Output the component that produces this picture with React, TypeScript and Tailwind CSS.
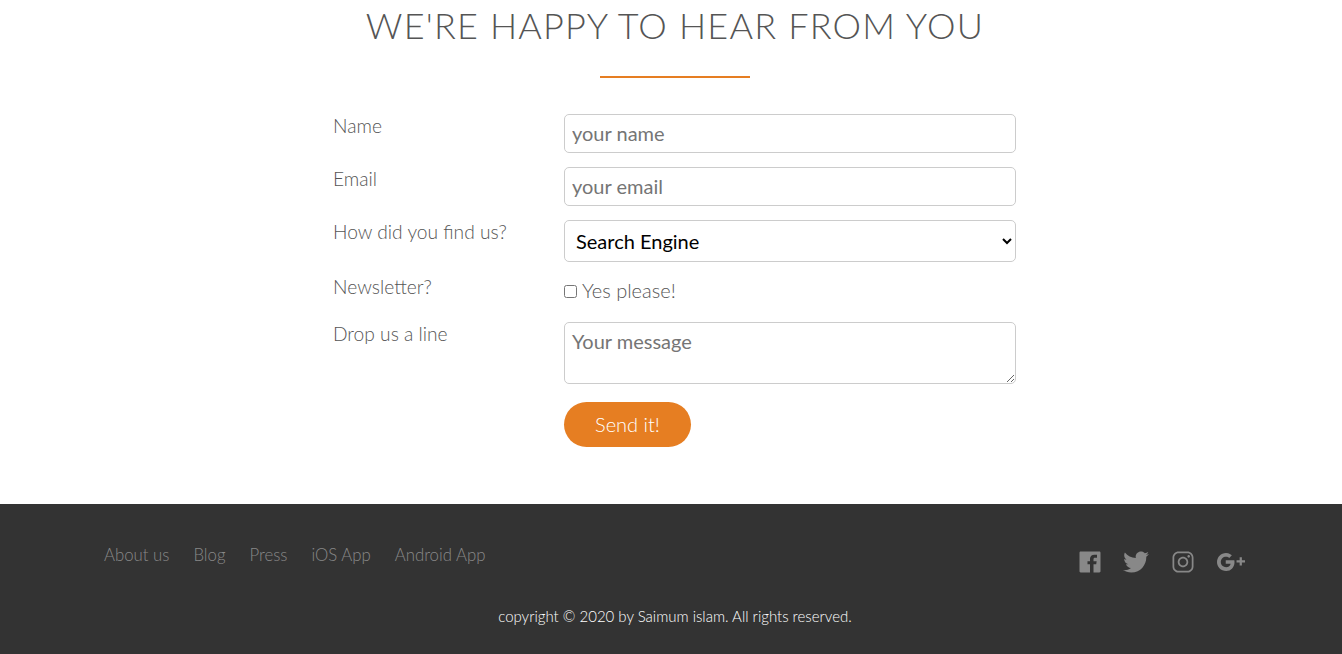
import React from "react";
import { IoLogoFacebook, IoLogoTwitter, IoLogoInstagram, IoLogoGoogleplus } from "react-icons/io";

const labelClass = "w-[231px] shrink-0 text-[19.2px] leading-[24px] font-light text-[#555555]";
const fieldClass =
  "w-[452px] border border-[#cccccc] rounded-[5px] px-[7px] text-[20px] font-normal bg-white outline-none placeholder:text-[#757575]";

export default function App() {
  return (
    <div className="h-[654px] w-[1342px] overflow-hidden bg-white font-['Lato',sans-serif]">
      <div className="w-[1350px]">
        <section className="h-[504px] flex flex-col items-center">
          <h2 className="mt-[4px] text-[36px] leading-[43px] font-light uppercase tracking-[1.18px] text-[#555555] whitespace-nowrap">
            We're happy to hear from you
          </h2>
          <div className="mt-[29px] w-[150px] h-[2px] bg-[#e67e22]" />
          <form className="mt-[36px] w-[684px] flex flex-col">
            <div className="flex items-start">
              <label className={labelClass}>Name</label>
              <input className={`${fieldClass} h-[39px] pb-[2px]`} placeholder="your name" />
            </div>
            <div className="flex mt-[14px] items-start">
              <label className={labelClass}>Email</label>
              <input className={`${fieldClass} h-[39px] pb-[2px]`} placeholder="your email" />
            </div>
            <div className="flex mt-[14px] items-start">
              <label className={labelClass}>How did you find us?</label>
              <select defaultValue="search" className={`${fieldClass} h-[42px] text-black appearance-auto`}>
                <option value="search">Search Engine</option>
                <option value="friends">Friends</option>
              </select>
            </div>
            <div className="flex mt-[14px] h-[46px] items-start">
              <label className="w-[231px] shrink-0 -mt-[1px] text-[19.2px] leading-[24px] font-light text-[#555555]">Newsletter?</label>
              <label className="flex items-center text-[20px] leading-[24px] font-light text-[#555555] mt-[2px]">
                <input type="checkbox" className="w-[13px] h-[13px] mr-[5px] mt-[2px] appearance-auto" />
                Yes please!
              </label>
            </div>
            <div className="flex items-start">
              <label className={labelClass}>Drop us a line</label>
              <textarea className={`${fieldClass} h-[62px] block py-[6px] leading-[24px]`} placeholder="Your message" />
            </div>
            <div className="flex mt-[18px]">
              <div className="w-[231px] shrink-0" />
              <button type="button" className="w-[127px] h-[45px] pb-[2px] rounded-full bg-[#e67e22] text-white text-[20px] font-light">
                Send it!
              </button>
            </div>
          </form>
        </section>
        <footer className="h-[150px] bg-[#333333]">
          <div className="w-[1140px] mx-auto flex justify-between">
            <ul className="flex gap-[24px] mt-[40px] -ml-[1px] text-[16.8px] leading-[22px] font-light text-[#888888]">
              <li>About us</li>
              <li>Blog</li>
              <li>Press</li>
              <li>iOS App</li>
              <li>Android App</li>
            </ul>
            <ul className="flex mt-[44px] text-[#888888]">
              <li className="mr-[18px]"><IoLogoFacebook size={28} /></li>
              <li className="mr-[19px]"><IoLogoTwitter size={28} /></li>
              <li className="mr-[20px]"><IoLogoInstagram size={28} /></li>
              <li><IoLogoGoogleplus size={28} /></li>
            </ul>
          </div>
          <p className="mt-[31px] text-center text-[15px] leading-[18px] font-light text-[#ffffff]">
            copyright © 2020 by Saimum islam. All rights reserved.
          </p>
        </footer>
      </div>
    </div>
  );
}
